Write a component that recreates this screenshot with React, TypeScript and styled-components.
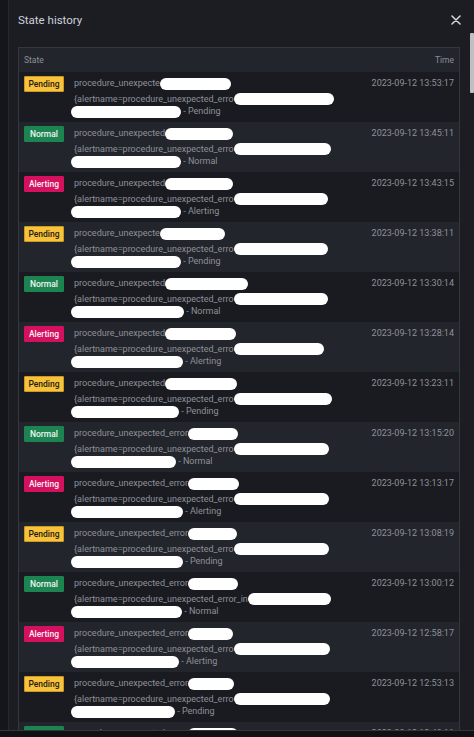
import React from 'react';
import styled, { createGlobalStyle } from 'styled-components';

const GlobalStyle = createGlobalStyle`
	html, body {
		margin: 0;
		padding: 0;
		background: #111217;
		overflow: hidden;
	}
	* {
		box-sizing: border-box;
	}
`;

type State = 'Pending' | 'Normal' | 'Alerting';

interface HistoryRow {
	state: State;
	time: string;
	name: string;
	nameBlob: number;
	labels: string;
	labelsBlob: number;
	tailBlob: number;
}

const SHORT = 'procedure_unexpecte';
const MID = 'procedure_unexpected';
const LONG = 'procedure_unexpected_error';
const LABELS = '{alertname=procedure_unexpected_erro';

const rows: HistoryRow[] = [
	{ state: 'Pending', time: '2023-09-12 13:53:17', name: SHORT, nameBlob: 71, labels: LABELS, labelsBlob: 100, tailBlob: 110 },
	{ state: 'Normal', time: '2023-09-12 13:45:11', name: MID, nameBlob: 68, labels: LABELS, labelsBlob: 97, tailBlob: 110 },
	{ state: 'Alerting', time: '2023-09-12 13:43:15', name: MID, nameBlob: 68, labels: LABELS, labelsBlob: 94, tailBlob: 110 },
	{ state: 'Pending', time: '2023-09-12 13:38:11', name: SHORT, nameBlob: 65, labels: LABELS, labelsBlob: 94, tailBlob: 110 },
	{ state: 'Normal', time: '2023-09-12 13:30:14', name: MID, nameBlob: 83, labels: LABELS, labelsBlob: 94, tailBlob: 113 },
	{ state: 'Alerting', time: '2023-09-12 13:28:14', name: MID, nameBlob: 71, labels: LABELS, labelsBlob: 90, tailBlob: 112 },
	{ state: 'Pending', time: '2023-09-12 13:23:11', name: MID, nameBlob: 72, labels: LABELS, labelsBlob: 98, tailBlob: 108 },
	{ state: 'Normal', time: '2023-09-12 13:15:20', name: LONG, nameBlob: 50, labels: LABELS, labelsBlob: 95, tailBlob: 105 },
	{ state: 'Alerting', time: '2023-09-12 13:13:17', name: LONG, nameBlob: 51, labels: LABELS, labelsBlob: 95, tailBlob: 112 },
	{ state: 'Pending', time: '2023-09-12 13:08:19', name: LONG, nameBlob: 49, labels: LABELS, labelsBlob: 95, tailBlob: 112 },
	{ state: 'Normal', time: '2023-09-12 13:00:12', name: LONG, nameBlob: 50, labels: '{alertname=procedure_unexpected_error_in', labelsBlob: 83, tailBlob: 111 },
	{ state: 'Alerting', time: '2023-09-12 12:58:17', name: LONG, nameBlob: 45, labels: LABELS, labelsBlob: 96, tailBlob: 108 },
	{ state: 'Pending', time: '2023-09-12 12:53:13', name: LONG, nameBlob: 46, labels: LABELS, labelsBlob: 96, tailBlob: 104 },
	{ state: 'Normal', time: '2023-09-12 12:49:11', name: LONG, nameBlob: 50, labels: LABELS, labelsBlob: 96, tailBlob: 108 },
];

const badgeColors: Record<State, { bg: string; fg: string; border: string }> = {
	Pending: { bg: '#f8c23b', fg: '#1d1b14', border: '#c99a27' },
	Normal: { bg: '#1b8450', fg: '#f2f5f3', border: '#1b8450' },
	Alerting: { bg: '#d5115f', fg: '#fbeff4', border: '#d5115f' },
};

const Page = styled.div`
	display: flex;
	flex-direction: column;
	height: 737px;
	font-family: Roboto, 'Liberation Sans', sans-serif;
	background: #111217;
`;

const Viewport = styled.div`
	display: flex;
	height: 731px;
	flex-shrink: 0;
	overflow: hidden;
	border-bottom: 1px solid #34373e;
`;

const BottomBar = styled.div`
	flex: 1;
	background: #101115;
`;

const SideStrip = styled.div`
	width: 9px;
	flex-shrink: 0;
	background: #14161b;
	border-right: 1px solid #262930;
`;

const Modal = styled.div`
	position: relative;
	flex: 1;
	display: flex;
	flex-direction: column;
	background: #1b1d23;
	padding: 0 14px 0 9px;
	overflow: hidden;
`;

const ModalHeader = styled.div`
	display: flex;
	flex-shrink: 0;
	align-items: center;
	justify-content: space-between;
	height: 38px;
	padding-top: 1px;
`;

const Title = styled.h2`
	margin: 0;
	font-size: 11.5px;
	font-weight: 400;
	color: #d0d1db;
`;

const CloseButton = styled.button`
	display: flex;
	align-items: center;
	justify-content: center;
	width: 14px;
	height: 14px;
	padding: 0;
	margin-right: -3px;
	background: none;
	border: none;
	cursor: pointer;
`;

const ScrollThumb = styled.div`
	position: absolute;
	right: 0;
	top: 33px;
	width: 4px;
	height: 60px;
	background: #bfc0c2;
	border-radius: 1px;
`;

const Table = styled.div`
	flex-shrink: 0;
	margin-top: 9px;
	border: 1px solid #34373e;
	display: flex;
	flex-direction: column;
`;

const HeaderRow = styled.div`
	display: flex;
	justify-content: space-between;
	align-items: center;
	height: 24px;
	padding: 0 5px;
	background: #22252b;
	font-size: 8.5px;
	color: #8d8f97;
`;

const Row = styled.div<{ $alt: boolean }>`
	display: flex;
	align-items: flex-start;
	height: 50px;
	flex-shrink: 0;
	padding: 4px 5px 0 5px;
	background: ${p => (p.$alt ? '#22252b' : '#191b20')};
`;

const Badge = styled.span<{ $state: State }>`
	display: inline-flex;
	align-items: center;
	justify-content: center;
	width: 40px;
	height: 16px;
	flex-shrink: 0;
	font-size: 8.5px;
	font-weight: 500;
	background: ${p => badgeColors[p.$state].bg};
	color: ${p => badgeColors[p.$state].fg};
	border: 1px solid ${p => badgeColors[p.$state].border};
	border-radius: 1px;
`;

const Details = styled.div`
	flex: 1;
	margin-left: 10px;
	font-size: 9px;
	color: #8f9198;
	min-width: 0;
`;

const NameLine = styled.div`
	line-height: 12px;
	margin-top: 1px;
	white-space: nowrap;
`;

const LabelLine = styled.div`
	line-height: 13px;
	white-space: nowrap;
	margin-top: 3px;
`;

const TailLine = styled.div`
	line-height: 10px;
	white-space: nowrap;
`;

const Blob = styled.span`
	display: inline-block;
	height: 12px;
	vertical-align: middle;
	background: #ffffff;
	border-radius: 7px;
`;

const Time = styled.span`
	flex-shrink: 0;
	font-size: 9px;
	line-height: 12px;
	margin-top: 1px;
	color: #8f9198;
`;

const CloseIcon = () => (
	<svg width="10" height="10" viewBox="0 0 10 10">
		<path d="M1 1 L9 9 M9 1 L1 9" stroke="#d0d1db" strokeWidth="1.6" strokeLinecap="round" />
	</svg>
);

export default function App() {
	return (
		<>
			<GlobalStyle />
			<Page>
				<Viewport>
					<SideStrip />
					<Modal>
						<ModalHeader>
							<Title>State history</Title>
							<CloseButton aria-label="Close">
								<CloseIcon />
							</CloseButton>
						</ModalHeader>
						<Table>
							<HeaderRow>
								<span>State</span>
								<span>Time</span>
							</HeaderRow>
							{rows.map((row, i) => (
								<Row key={i} $alt={i % 2 === 1}>
									<Badge $state={row.state}>{row.state}</Badge>
									<Details>
										<NameLine>
											{row.name}
											<Blob style={{ width: row.nameBlob }} />
										</NameLine>
										<LabelLine>
											{row.labels}
											<Blob style={{ width: row.labelsBlob }} />
										</LabelLine>
										<TailLine>
											<Blob style={{ width: row.tailBlob, marginLeft: -3 }} /> - {row.state}
										</TailLine>
									</Details>
									<Time>{row.time}</Time>
								</Row>
							))}
						</Table>
						<ScrollThumb />
					</Modal>
				</Viewport>
				<BottomBar />
			</Page>
		</>
	);
}
